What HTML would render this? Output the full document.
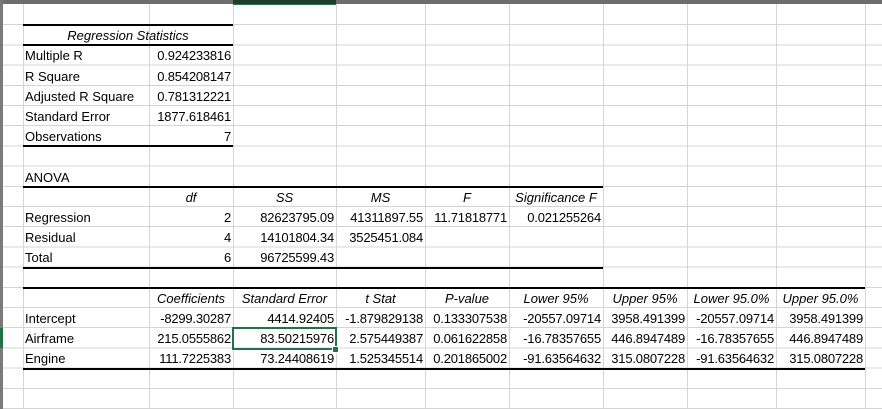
<!DOCTYPE html>
<html><head><meta charset="utf-8"><style>
body{margin:0;width:882px;height:409px;overflow:hidden;background:#fff;font-family:"Liberation Sans",sans-serif;font-size:13px;color:#000;position:relative}
.g{position:absolute;inset:0;background:repeating-linear-gradient(to bottom,transparent 0,transparent 19.2px,#d4d4d4 19.2px,#d4d4d4 20.2px);background-position:0 5px}
.v{position:absolute;top:4px;bottom:0;width:1px;background:#d4d4d4}
.c{position:absolute;height:20px;line-height:22px;padding:0 2px;box-sizing:border-box;white-space:nowrap}
.r{text-align:right;letter-spacing:-0.2px}.m{text-align:center}.i{font-style:italic}
.t{position:absolute;height:2px;background:#000}
</style></head><body>
<div class="g"></div>
<div class="v" style="left:23px"></div><div class="v" style="left:149px"></div><div class="v" style="left:233px"></div><div class="v" style="left:336px"></div><div class="v" style="left:425px"></div><div class="v" style="left:509px"></div><div class="v" style="left:603px"></div><div class="v" style="left:687px"></div><div class="v" style="left:776px"></div><div class="v" style="left:865px"></div>
<div style="position:absolute;left:0;top:0;width:882px;height:4px;background:#6d6d6d"></div>
<div style="position:absolute;left:233px;top:0;width:103px;height:4px;background:#1f3d2c;border-bottom:1px solid #217346"></div>
<div style="position:absolute;left:0;top:0;width:3px;height:409px;background:#7a7a7a"></div>
<div style="position:absolute;left:0;top:328px;width:3px;height:20px;background:#217346"></div>

<div class="t" style="left:23px;width:210px;top:24px"></div>
<div class="c m i" style="left:23px;width:210px;top:25px">Regression Statistics</div>
<div class="t" style="left:23px;width:210px;top:44px"></div>
<div class="c" style="left:23px;width:126px;top:45px">Multiple R</div><div class="c r" style="left:149px;width:84px;top:45px">0.924233816</div>
<div class="c" style="left:23px;width:126px;top:66px">R Square</div><div class="c r" style="left:149px;width:84px;top:66px">0.854208147</div>
<div class="c" style="left:23px;width:126px;top:86px">Adjusted R Square</div><div class="c r" style="left:149px;width:84px;top:86px">0.781312221</div>
<div class="c" style="left:23px;width:126px;top:106px">Standard Error</div><div class="c r" style="left:149px;width:84px;top:106px">1877.618461</div>
<div class="c" style="left:23px;width:126px;top:126px">Observations</div><div class="c r" style="left:149px;width:84px;top:126px">7</div>
<div class="t" style="left:23px;width:210px;top:145px"></div>

<div class="c" style="left:23px;width:126px;top:167px">ANOVA</div>
<div class="t" style="left:23px;width:580px;top:186px"></div>
<div class="c m i" style="left:149px;width:84px;top:187px">df</div>
<div class="c m i" style="left:233px;width:103px;top:187px">SS</div>
<div class="c m i" style="left:336px;width:89px;top:187px">MS</div>
<div class="c m i" style="left:425px;width:84px;top:187px">F</div>
<div class="c m i" style="left:509px;width:94px;top:187px">Significance F</div>
<div class="c" style="left:23px;width:126px;top:207px">Regression</div><div class="c r" style="left:149px;width:84px;top:207px">2</div><div class="c r" style="left:233px;width:103px;top:207px">82623795.09</div><div class="c r" style="left:336px;width:89px;top:207px">41311897.55</div><div class="c r" style="left:425px;width:84px;top:207px">11.71818771</div><div class="c r" style="left:509px;width:94px;top:207px">0.021255264</div>
<div class="c" style="left:23px;width:126px;top:227px">Residual</div><div class="c r" style="left:149px;width:84px;top:227px">4</div><div class="c r" style="left:233px;width:103px;top:227px">14101804.34</div><div class="c r" style="left:336px;width:89px;top:227px">3525451.084</div>
<div class="c" style="left:23px;width:126px;top:247px">Total</div><div class="c r" style="left:149px;width:84px;top:247px">6</div><div class="c r" style="left:233px;width:103px;top:247px">96725599.43</div>
<div class="t" style="left:23px;width:580px;top:267px"></div>

<div class="t" style="left:23px;width:842px;top:287px"></div>
<div class="c m i" style="left:149px;width:84px;top:288px">Coefficients</div>
<div class="c m i" style="left:233px;width:103px;top:288px">Standard Error</div>
<div class="c m i" style="left:336px;width:89px;top:288px">t Stat</div>
<div class="c m i" style="left:425px;width:84px;top:288px">P-value</div>
<div class="c m i" style="left:509px;width:94px;top:288px">Lower 95%</div>
<div class="c m i" style="left:603px;width:84px;top:288px">Upper 95%</div>
<div class="c m i" style="left:687px;width:89px;top:288px">Lower 95.0%</div>
<div class="c m i" style="left:776px;width:89px;top:288px">Upper 95.0%</div>

<div class="c" style="left:23px;width:126px;top:308px">Intercept</div><div class="c r" style="left:149px;width:84px;top:308px">-8299.30287</div><div class="c r" style="left:233px;width:103px;top:308px">4414.92405</div><div class="c r" style="left:336px;width:89px;top:308px">-1.879829138</div><div class="c r" style="left:425px;width:84px;top:308px">0.133307538</div><div class="c r" style="left:509px;width:94px;top:308px">-20557.09714</div><div class="c r" style="left:603px;width:84px;top:308px">3958.491399</div><div class="c r" style="left:687px;width:89px;top:308px">-20557.09714</div><div class="c r" style="left:776px;width:89px;top:308px">3958.491399</div>

<div class="c" style="left:23px;width:126px;top:328px">Airframe</div><div class="c r" style="left:149px;width:84px;top:328px">215.0555862</div><div class="c r" style="left:233px;width:103px;top:328px">83.50215976</div><div class="c r" style="left:336px;width:89px;top:328px">2.575449387</div><div class="c r" style="left:425px;width:84px;top:328px">0.061622858</div><div class="c r" style="left:509px;width:94px;top:328px">-16.78357655</div><div class="c r" style="left:603px;width:84px;top:328px">446.8947489</div><div class="c r" style="left:687px;width:89px;top:328px">-16.78357655</div><div class="c r" style="left:776px;width:89px;top:328px">446.8947489</div>

<div class="c" style="left:23px;width:126px;top:348px">Engine</div><div class="c r" style="left:149px;width:84px;top:348px">111.7225383</div><div class="c r" style="left:233px;width:103px;top:348px">73.24408619</div><div class="c r" style="left:336px;width:89px;top:348px">1.525345514</div><div class="c r" style="left:425px;width:84px;top:348px">0.201865002</div><div class="c r" style="left:509px;width:94px;top:348px">-91.63564632</div><div class="c r" style="left:603px;width:84px;top:348px">315.0807228</div><div class="c r" style="left:687px;width:89px;top:348px">-91.63564632</div><div class="c r" style="left:776px;width:89px;top:348px">315.0807228</div>
<div class="t" style="left:23px;width:842px;top:368px"></div>

<div style="position:absolute;left:232px;top:327px;width:101px;height:19px;border:2px solid #217346"></div>
<div style="position:absolute;left:332px;top:346px;width:5px;height:5px;background:#217346;border:1px solid #fff"></div>
</body></html>
